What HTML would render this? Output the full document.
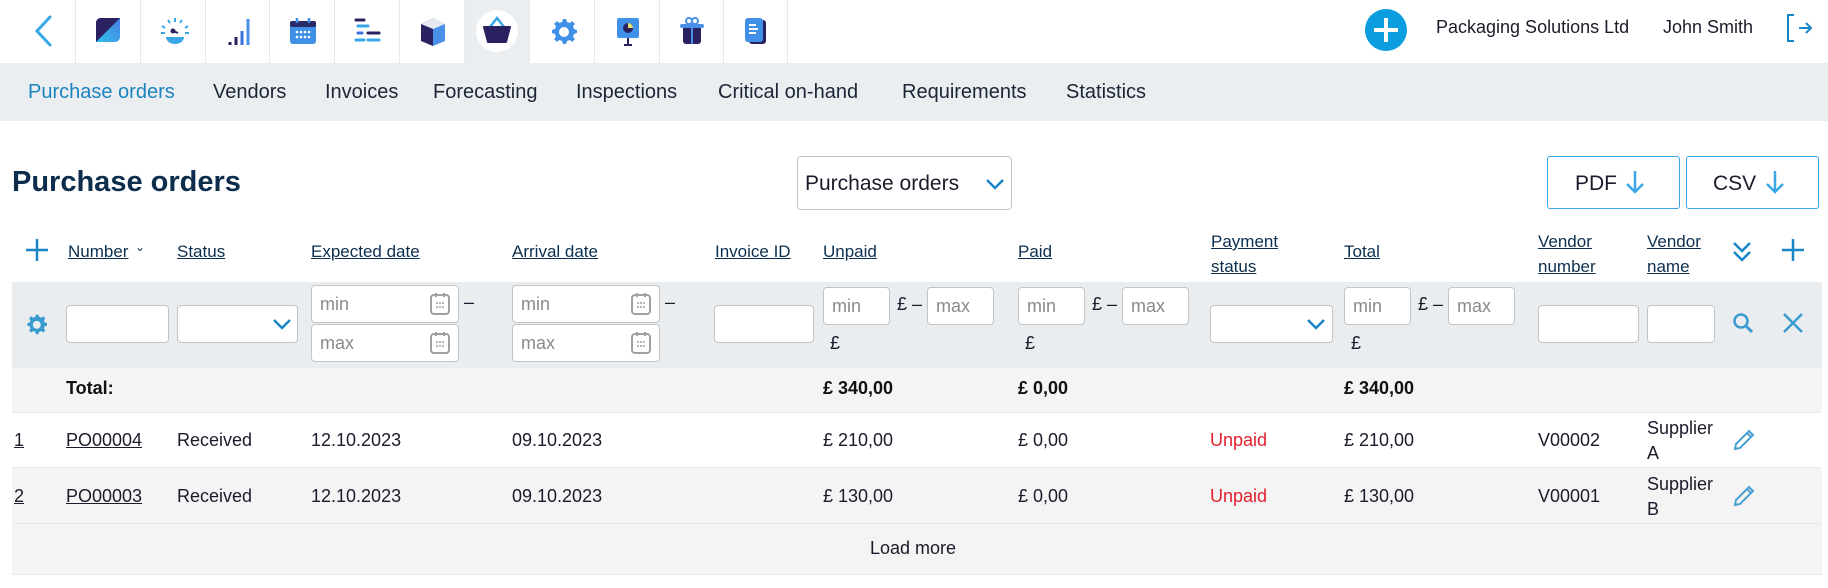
<!DOCTYPE html>
<html><head><meta charset="utf-8"><style>
*{box-sizing:border-box;margin:0;padding:0}
body{width:1828px;height:588px;background:#fff;font-family:"Liberation Sans",sans-serif;color:#1b1b2b;position:relative;overflow:hidden;font-size:18px}
.a{position:absolute;white-space:nowrap}
.cell{position:absolute;top:0;width:65px;height:63px;border-left:1px solid #e6e9ed}
.cell svg{position:absolute;left:19px;top:17px}
.nav{position:absolute;top:63px;left:0;width:1828px;height:58px;background:#eaeef1}
.nav span{position:absolute;top:18px;font-size:20px;color:#1c2536}
.h{color:#0d2f4f;text-decoration:underline;font-size:17px}
.inp{position:absolute;background:#fff;border:1px solid #c4c4c4;border-radius:4px}
.ph{position:absolute;color:#8a8a8a;font-size:18px;left:8px;top:8px}
.bold{font-weight:bold}
</style></head><body>
<!-- top bar -->
<svg class="a" style="left:32px;top:14px" width="22" height="34" viewBox="0 0 22 34"><path d="M18 3 L5 17 L18 31" fill="none" stroke="#37a8e8" stroke-width="3" stroke-linecap="round"/></svg>
<div class="cell" style="left:75px"><svg width="26" height="26"><defs><linearGradient id="g1" x1="0" y1="1" x2="1" y2="0"><stop offset="0" stop-color="#2fc0e8"/><stop offset="1" stop-color="#4a7fe8"/></linearGradient></defs><path d="M5 1h20v19a5 5 0 0 1-5 5H1V6a5 5 0 0 1 4-5z" fill="url(#g1)"/><path d="M5 1h20L1 25V6a5 5 0 0 1 4-5z" fill="#2a2160"/></svg></div>
<div class="cell" style="left:140px"><svg width="30" height="30" viewBox="0 0 30 30"><g stroke="#3aa6e8" stroke-width="2"><path d="M15 1v4M8 3l2 3M22 3l-2 3M2 9l3 2M28 9l-3 2M1 16h4M25 16h4"/></g><circle cx="13" cy="14" r="2.5" fill="#2a2160"/><path d="M13 14l5 2" stroke="#2a2160" stroke-width="2"/><path d="M6 20h18a9 7 0 0 1-18 0z" fill="#3aa6e8"/></svg></div>
<div class="cell" style="left:205px"><svg width="26" height="30"><g stroke-width="3"><path d="M5 28v-3" stroke="#2a2160"/><path d="M11 28v-8" stroke="#2a2160"/><path d="M17 28v-14" stroke="#3a70d8"/><path d="M23 28v-26" stroke="#4a8fe8"/></g></svg></div>
<div class="cell" style="left:269px"><svg width="28" height="28"><rect x="1" y="4" width="26" height="23" rx="3" fill="#3f90e6"/><rect x="1" y="4" width="26" height="6" rx="2" fill="#2a2a6a"/><path d="M8 1v5M20 1v5" stroke="#3f90e6" stroke-width="2.5"/><g fill="#fff"><circle cx="8" cy="15" r="1.3"/><circle cx="12" cy="15" r="1.3"/><circle cx="16" cy="15" r="1.3"/><circle cx="20" cy="15" r="1.3"/><circle cx="8" cy="20" r="1.3"/><circle cx="12" cy="20" r="1.3"/><circle cx="16" cy="20" r="1.3"/><circle cx="20" cy="20" r="1.3"/></g></svg></div>
<div class="cell" style="left:334px"><svg width="28" height="28"><g stroke-width="3" stroke-linecap="round"><path d="M2 3h8" stroke="#2a2160"/><path d="M4 9h10" stroke="#3aa6e8"/><path d="M4 16h4" stroke="#3a70d8"/><path d="M14 16h11" stroke="#2a2160"/><path d="M2 23h8M14 23h11" stroke="#3aa6e8"/></g></svg></div>
<div class="cell" style="left:399px"><svg width="28" height="30"><path d="M14 1l12 6v17l-12 5z" fill="#4a8fe8"/><path d="M14 1L2 7v17l12 5z" fill="#2a2160"/><path d="M2 7l12-6 12 6-12 5z" fill="#e6eaf0"/></svg></div>
<div class="cell" style="left:464px;background:#eaeef1"><div class="a" style="left:11px;top:10px;width:42px;height:42px;border-radius:50%;background:#fff"></div><svg width="30" height="30" style="left:17px;top:15px"><path d="M8 12l7-9 7 9" fill="none" stroke="#3aa6e8" stroke-width="2.5"/><path d="M2 12h26l-4 15H6z" fill="#2a2160" stroke="#2a2160" stroke-linejoin="round" stroke-width="2"/></svg></div>
<div class="cell" style="left:529px"><svg width="28" height="28" viewBox="0 0 28 28"><path d="M14 2l3 0 1 3 3 1 2-2 3 3-2 2 1 3 3 1v3l-3 1-1 3 2 2-3 3-2-2-3 1-1 3h-3l-1-3-3-1-2 2-3-3 2-2-1-3-3-1v-3l3-1 1-3-2-2 3-3 2 2 3-1 1-3z" fill="#3f90e6"/><circle cx="15" cy="15" r="5" fill="#fff"/></svg></div>
<div class="cell" style="left:594px"><svg width="28" height="30"><rect x="3" y="1" width="22" height="20" rx="2" fill="#3f90e6"/><circle cx="14" cy="11" r="5" fill="#2a2160"/><path d="M14 11V6a5 5 0 0 1 5 5z" fill="#e8e070"/><path d="M14 21v7M10 28h8" stroke="#2a2160" stroke-width="2"/></svg></div>
<div class="cell" style="left:659px"><svg width="26" height="30"><circle cx="10" cy="4" r="3" fill="none" stroke="#4a8fe8" stroke-width="2"/><circle cx="16" cy="4" r="3" fill="none" stroke="#4a8fe8" stroke-width="2"/><rect x="4" y="9" width="18" height="18" rx="3" fill="#2a2160"/><rect x="1" y="7" width="24" height="4" rx="2" fill="#4a8fe8"/><path d="M13 8v19" stroke="#4a8fe8" stroke-width="2"/></svg></div>
<div class="cell" style="left:723px;width:65px;border-right:1px solid #e6e9ed"><svg width="26" height="30"><rect x="6" y="3" width="17" height="24" rx="3" fill="#2a2160"/><rect x="2" y="1" width="18" height="24" rx="3" fill="#3f90e6"/><path d="M6 8h7M6 12h9M6 16h7" stroke="#fff" stroke-width="2"/></svg></div>

<div class="a" style="left:1365px;top:9px;width:42px;height:42px;border-radius:50%;background:#0a9de0"></div>
<div class="a" style="left:1384px;top:18px;width:4px;height:24px;background:#fff"></div>
<div class="a" style="left:1374px;top:28px;width:24px;height:4px;background:#fff"></div>
<div class="a" style="left:1436px;top:17px;font-size:18px">Packaging Solutions Ltd</div>
<div class="a" style="left:1663px;top:17px;font-size:18px">John Smith</div>
<svg class="a" style="left:1785px;top:13px" width="30" height="30"><path d="M9 2H3v26h6" fill="none" stroke="#1a86c8" stroke-width="2"/><path d="M14 15h12M21 10l5 5-5 5" fill="none" stroke="#1a86c8" stroke-width="2"/></svg>

<div class="nav">
<span style="left:28px;color:#1b84bf">Purchase orders</span><span style="left:213px">Vendors</span><span style="left:325px">Invoices</span><span style="left:433px">Forecasting</span><span style="left:576px">Inspections</span><span style="left:718px">Critical on-hand</span><span style="left:902px">Requirements</span><span style="left:1066px">Statistics</span>
</div>

<div class="a bold" style="left:12px;top:166px;font-size:29px;color:#0c2d4c">Purchase orders</div>
<div class="a" style="left:797px;top:156px;width:215px;height:54px;border:1px solid #c4c4c4;border-radius:4px"></div>
<div class="a" style="left:805px;top:172px;font-size:21px">Purchase orders</div>
<svg class="a" style="left:985px;top:178px" width="20" height="12"><path d="M2 2l8 8 8-8" fill="none" stroke="#1a86c8" stroke-width="2.5"/></svg>
<div class="a" style="left:1547px;top:156px;width:133px;height:53px;border:1px solid #3aa6e8;border-radius:3px"></div>
<div class="a" style="left:1686px;top:156px;width:133px;height:53px;border:1px solid #3aa6e8;border-radius:3px"></div>
<div class="a" style="left:1575px;top:172px;font-size:21px">PDF</div>
<div class="a" style="left:1713px;top:172px;font-size:21px">CSV</div>
<svg class="a" style="left:1625px;top:170px" width="20" height="24"><path d="M10 1v21M2 14l8 8 8-8" fill="none" stroke="#3aa6e8" stroke-width="2.5"/></svg>
<svg class="a" style="left:1765px;top:170px" width="20" height="24"><path d="M10 1v21M2 14l8 8 8-8" fill="none" stroke="#3aa6e8" stroke-width="2.5"/></svg>

<!-- header -->
<svg class="a" style="left:26px;top:239px" width="22" height="22"><path d="M11 0v22M0 11h22" stroke="#1a86c8" stroke-width="2.5"/></svg>
<div class="a h" style="left:68px;top:242px">Number</div><div class="a" style="left:135px;top:240px;font-size:12px;color:#0d2f4f">⌄</div>
<div class="a h" style="left:177px;top:242px">Status</div>
<div class="a h" style="left:311px;top:242px">Expected date</div>
<div class="a h" style="left:512px;top:242px">Arrival date</div>
<div class="a h" style="left:715px;top:242px">Invoice ID</div>
<div class="a h" style="left:823px;top:242px">Unpaid</div>
<div class="a h" style="left:1018px;top:242px">Paid</div>
<div class="a h" style="left:1211px;top:229px;line-height:25px">Payment<br>status</div>
<div class="a h" style="left:1344px;top:242px">Total</div>
<div class="a h" style="left:1538px;top:229px;line-height:25px">Vendor<br>number</div>
<div class="a h" style="left:1647px;top:229px;line-height:25px">Vendor<br>name</div>
<svg class="a" style="left:1731px;top:240px" width="22" height="24"><path d="M3 3l8 8 8-8M3 12l8 8 8-8" fill="none" stroke="#1a86c8" stroke-width="2.5"/></svg>
<svg class="a" style="left:1782px;top:239px" width="22" height="22"><path d="M11 0v22M0 11h22" stroke="#1a86c8" stroke-width="2.5"/></svg>

<!-- filter row -->
<div class="a" style="left:12px;top:282px;width:1810px;height:86px;background:#eaedf0"></div>
<svg class="a" style="left:25px;top:313px" width="22" height="22" viewBox="0 0 28 28"><path d="M14 2l3 0 1 3 3 1 2-2 3 3-2 2 1 3 3 1v3l-3 1-1 3 2 2-3 3-2-2-3 1-1 3h-3l-1-3-3-1-2 2-3-3 2-2-1-3-3-1v-3l3-1 1-3-2-2 3-3 2 2 3-1 1-3z" fill="#3a9bd0"/><circle cx="15" cy="15" r="5" fill="#eaedf0"/></svg>
<div class="inp" style="left:66px;top:305px;width:103px;height:38px"></div>
<div class="inp" style="left:177px;top:305px;width:121px;height:38px"></div>
<svg class="a" style="left:272px;top:318px" width="20" height="12"><path d="M2 2l8 8 8-8" fill="none" stroke="#1a86c8" stroke-width="2.5"/></svg>
<div class="inp" style="left:311px;top:285px;width:148px;height:38px"><span class="ph">min</span></div>
<div class="inp" style="left:311px;top:324px;width:148px;height:38px"><span class="ph">max</span></div>
<div class="inp" style="left:512px;top:285px;width:148px;height:38px"><span class="ph">min</span></div>
<div class="inp" style="left:512px;top:324px;width:148px;height:38px"><span class="ph">max</span></div>
<svg class="a" style="left:430px;top:292px" width="20" height="24"><rect x="1" y="3" width="18" height="19" rx="3" fill="#fff" stroke="#a0a0a0" stroke-width="2"/><path d="M6 1v4M14 1v4" stroke="#a0a0a0" stroke-width="2"/><g fill="#a0a0a0"><circle cx="7" cy="11" r="1"/><circle cx="10" cy="11" r="1"/><circle cx="13" cy="11" r="1"/><circle cx="7" cy="15" r="1"/><circle cx="10" cy="15" r="1"/><circle cx="13" cy="15" r="1"/></g></svg>
<svg class="a" style="left:430px;top:331px" width="20" height="24"><rect x="1" y="3" width="18" height="19" rx="3" fill="#fff" stroke="#a0a0a0" stroke-width="2"/><path d="M6 1v4M14 1v4" stroke="#a0a0a0" stroke-width="2"/><g fill="#a0a0a0"><circle cx="7" cy="11" r="1"/><circle cx="10" cy="11" r="1"/><circle cx="13" cy="11" r="1"/><circle cx="7" cy="15" r="1"/><circle cx="10" cy="15" r="1"/><circle cx="13" cy="15" r="1"/></g></svg>
<svg class="a" style="left:631px;top:292px" width="20" height="24"><rect x="1" y="3" width="18" height="19" rx="3" fill="#fff" stroke="#a0a0a0" stroke-width="2"/><path d="M6 1v4M14 1v4" stroke="#a0a0a0" stroke-width="2"/><g fill="#a0a0a0"><circle cx="7" cy="11" r="1"/><circle cx="10" cy="11" r="1"/><circle cx="13" cy="11" r="1"/><circle cx="7" cy="15" r="1"/><circle cx="10" cy="15" r="1"/><circle cx="13" cy="15" r="1"/></g></svg>
<svg class="a" style="left:631px;top:331px" width="20" height="24"><rect x="1" y="3" width="18" height="19" rx="3" fill="#fff" stroke="#a0a0a0" stroke-width="2"/><path d="M6 1v4M14 1v4" stroke="#a0a0a0" stroke-width="2"/><g fill="#a0a0a0"><circle cx="7" cy="11" r="1"/><circle cx="10" cy="11" r="1"/><circle cx="13" cy="11" r="1"/><circle cx="7" cy="15" r="1"/><circle cx="10" cy="15" r="1"/><circle cx="13" cy="15" r="1"/></g></svg>
<div class="a" style="left:464px;top:292px">–</div>
<div class="a" style="left:665px;top:292px">–</div>
<div class="inp" style="left:714px;top:305px;width:100px;height:38px"></div>
<div class="inp" style="left:823px;top:287px;width:67px;height:38px"><span class="ph">min</span></div>
<div class="a" style="left:897px;top:294px">£ –</div>
<div class="inp" style="left:927px;top:287px;width:67px;height:38px"><span class="ph">max</span></div>
<div class="a" style="left:830px;top:333px">£</div>
<div class="inp" style="left:1018px;top:287px;width:67px;height:38px"><span class="ph">min</span></div>
<div class="a" style="left:1092px;top:294px">£ –</div>
<div class="inp" style="left:1122px;top:287px;width:67px;height:38px"><span class="ph">max</span></div>
<div class="a" style="left:1025px;top:333px">£</div>
<div class="inp" style="left:1210px;top:305px;width:123px;height:38px"></div>
<svg class="a" style="left:1306px;top:318px" width="20" height="12"><path d="M2 2l8 8 8-8" fill="none" stroke="#1a86c8" stroke-width="2.5"/></svg>
<div class="inp" style="left:1344px;top:287px;width:67px;height:38px"><span class="ph">min</span></div>
<div class="a" style="left:1418px;top:294px">£ –</div>
<div class="inp" style="left:1448px;top:287px;width:67px;height:38px"><span class="ph">max</span></div>
<div class="a" style="left:1351px;top:333px">£</div>
<div class="inp" style="left:1538px;top:305px;width:101px;height:38px"></div>
<div class="inp" style="left:1647px;top:305px;width:68px;height:38px"></div>
<svg class="a" style="left:1732px;top:312px" width="22" height="22"><circle cx="9" cy="9" r="6.5" fill="none" stroke="#3a9bd0" stroke-width="2.5"/><path d="M14 14l6 6" stroke="#3a9bd0" stroke-width="3"/></svg>
<svg class="a" style="left:1782px;top:312px" width="22" height="22"><path d="M2 2l18 18M20 2L2 20" stroke="#3a9bd0" stroke-width="2.5"/></svg>

<!-- total row -->
<div class="a" style="left:12px;top:368px;width:1810px;height:45px;background:#f4f4f4;border-bottom:1px solid #e8e8e8"></div>
<div class="a bold" style="left:66px;top:378px;font-size:18px;color:#111">Total:</div>
<div class="a bold" style="left:823px;top:378px;color:#111">£ 340,00</div>
<div class="a bold" style="left:1018px;top:378px;color:#111">£ 0,00</div>
<div class="a bold" style="left:1344px;top:378px;color:#111">£ 340,00</div>

<!-- rows -->
<div class="a" style="left:12px;top:413px;width:1810px;height:55px;background:#fff;border-bottom:1px solid #e8e8e8"></div>
<div class="a" style="left:12px;top:468px;width:1810px;height:56px;background:#f4f4f4;border-bottom:1px solid #e8e8e8"></div>
<div class="a" style="left:12px;top:524px;width:1810px;height:51px;background:#f4f4f4;border-bottom:1px solid #e8e8e8"></div>

<div class="a" style="left:14px;top:430px;text-decoration:underline">1</div>
<div class="a" style="left:66px;top:430px;text-decoration:underline">PO00004</div>
<div class="a" style="left:177px;top:430px">Received</div>
<div class="a" style="left:311px;top:430px">12.10.2023</div>
<div class="a" style="left:512px;top:430px">09.10.2023</div>
<div class="a" style="left:823px;top:430px">£ 210,00</div>
<div class="a" style="left:1018px;top:430px">£ 0,00</div>
<div class="a" style="left:1210px;top:430px;color:#e4202e">Unpaid</div>
<div class="a" style="left:1344px;top:430px">£ 210,00</div>
<div class="a" style="left:1538px;top:430px">V00002</div>
<div class="a" style="left:1647px;top:416px;line-height:25px">Supplier<br>A</div>

<div class="a" style="left:14px;top:486px;text-decoration:underline">2</div>
<div class="a" style="left:66px;top:486px;text-decoration:underline">PO00003</div>
<div class="a" style="left:177px;top:486px">Received</div>
<div class="a" style="left:311px;top:486px">12.10.2023</div>
<div class="a" style="left:512px;top:486px">09.10.2023</div>
<div class="a" style="left:823px;top:486px">£ 130,00</div>
<div class="a" style="left:1018px;top:486px">£ 0,00</div>
<div class="a" style="left:1210px;top:486px;color:#e4202e">Unpaid</div>
<div class="a" style="left:1344px;top:486px">£ 130,00</div>
<div class="a" style="left:1538px;top:486px">V00001</div>
<div class="a" style="left:1647px;top:472px;line-height:25px">Supplier<br>B</div>

<svg class="a" style="left:1732px;top:428px" width="24" height="24"><path d="M3 21l1-5L17 3l4 4L8 20z M15 5l4 4" fill="none" stroke="#4a9fd0" stroke-width="2"/></svg>
<svg class="a" style="left:1732px;top:484px" width="24" height="24"><path d="M3 21l1-5L17 3l4 4L8 20z M15 5l4 4" fill="none" stroke="#4a9fd0" stroke-width="2"/></svg>

<div class="a" style="left:870px;top:538px;font-size:18px">Load more</div>
</body></html>
